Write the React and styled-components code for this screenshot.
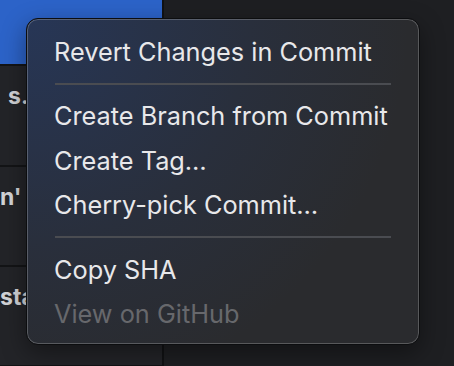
import React from 'react';
import styled, { createGlobalStyle } from 'styled-components';

const GlobalStyle = createGlobalStyle`
  html, body {
    margin: 0;
    padding: 0;
    background: #1e1f22;
  }
  body {
    font-family: Inter, "Noto Sans", sans-serif;
    -webkit-font-smoothing: antialiased;
  }
`

const Screen = styled.div`
  position: relative;
  display: flex;
  width: 454px;
  height: 366px;
  overflow: hidden;
  background: #1e1f22;
`

const HistoryColumn = styled.div`
  display: flex;
  flex-direction: column;
  width: 162px;
  flex-shrink: 0;
  background: #232428;
  border-right: 2px solid #111214;
`

const CommitRow = styled.div`
  height: ${p => p.height}px;
  flex-shrink: 0;
  box-sizing: border-box;
  padding: 16px 0 0 ${p => p.indent || 0}px;
  background: ${p => (p.selected ? '#2c63c8' : 'transparent')};
  border-bottom: 2px solid #131416;
  color: #d2d3d6;
  font-size: 23px;
  font-weight: 700;
  white-space: nowrap;
  overflow: hidden;
`

const Menu = styled.div`
  position: absolute;
  left: 26px;
  top: 18px;
  width: 394px;
  height: 327px;
  box-sizing: border-box;
  padding: 10px 28px 0 27px;
  border: 1px solid #0c0d0f;
  border-radius: 12px;
  background:
    radial-gradient(circle at 0% 0%, rgba(38, 58, 100, 0.75) 0%, rgba(38, 58, 100, 0.25) 45%, rgba(42, 43, 46, 0) 75%),
    #2a2b2e;
  box-shadow: inset 0 0 0 1px rgba(255, 255, 255, 0.22), 0 8px 24px rgba(0, 0, 0, 0.4);
  display: flex;
  flex-direction: column;
`

const MenuItem = styled.div`
  height: 44.5px;
  flex-shrink: 0;
  display: flex;
  align-items: center;
  font-size: 25.3px;
  color: ${p => (p.disabled ? '#67686c' : '#e8e8ea')};
  white-space: nowrap;
`

const Separator = styled.div`
  height: 20px;
  flex-shrink: 0;
  display: flex;
  align-items: center;
  padding-left: 1px;

  &::after {
    content: '';
    display: block;
    width: 100%;
    height: 2px;
    background: #4a4c51;
  }
`

export default function App() {
  return (
    <>
      <GlobalStyle />
      <Screen>
        <HistoryColumn>
          <CommitRow selected height={66} />
          <CommitRow height={101} indent={8}>s.</CommitRow>
          <CommitRow height={100}>n'</CommitRow>
          <CommitRow height={100}>sta</CommitRow>
        </HistoryColumn>
        <Menu>
          <MenuItem>Revert Changes in Commit</MenuItem>
          <Separator />
          <MenuItem>Create Branch from Commit</MenuItem>
          <MenuItem>Create Tag…</MenuItem>
          <MenuItem>Cherry-pick Commit…</MenuItem>
          <Separator />
          <MenuItem>Copy SHA</MenuItem>
          <MenuItem disabled>View on GitHub</MenuItem>
        </Menu>
      </Screen>
    </>
  )
}
